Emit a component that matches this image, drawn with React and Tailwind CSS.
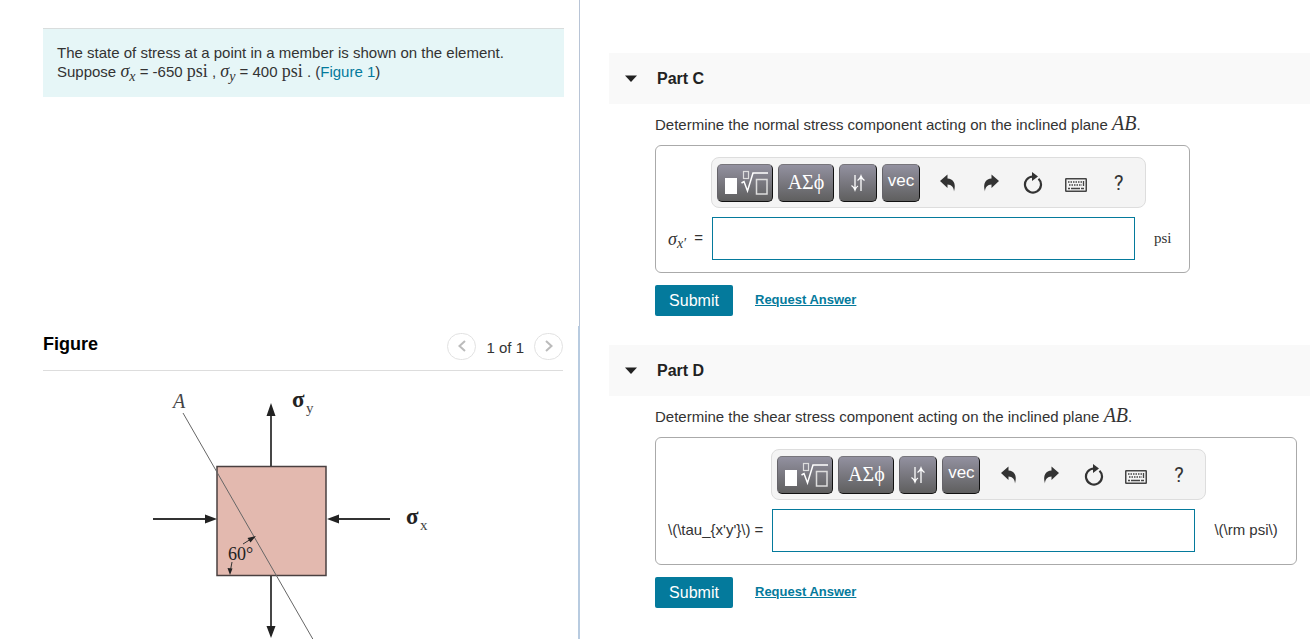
import React from 'react';

const parts = [
  {
    id: 'c',
    title: 'Part C',
    kind: 'normal',
    label: (
      <span className="flex items-center gap-2">
        <Sym base="σ" sub="x′" />
        <span>=</span>
      </span>
    ),
    unit: <span className="font-['Liberation_Serif',serif]">psi</span>,
  },
  {
    id: 'd',
    title: 'Part D',
    kind: 'shear',
    label: "\\(\\tau_{x'y'}\\) =",
    unit: '\\(\\rm psi\\)',
  },
];

function Sym({ base, sub }) {
  return (
    <span className="font-['Liberation_Serif',serif] text-lg leading-none italic">
      {base}
      <sub className="text-sm leading-none">{sub}</sub>
    </span>
  );
}

function Unit({ children }) {
  return (
    <span className="font-['Liberation_Serif',serif] text-lg leading-none">
      {children}
    </span>
  );
}

function TemplatesIcon() {
  return (
    <svg width="46" height="28" viewBox="0 0 46 28" fill="none">
      <rect x="3" y="9" width="12" height="16" fill="#fff" />
      <rect x="21.5" y="2.500" width="5" height="7" stroke="#ddd" strokeWidth="1.2" />
      <path d="M19.500 14l2.500-1.500 3.500 9.500L31 4h15" stroke="#fff" strokeWidth="1.5" />
      <rect x="34.500" y="10.500" width="10.500" height="14.500" stroke="#ddd" strokeWidth="1.5" />
    </svg>
  );
}

function ArrowsIcon() {
  return (
    <svg width="16" height="20" viewBox="0 0 16 20" fill="none" stroke="#fff" strokeWidth="1.3">
      <path d="M5 2v15M1.5 12.5Q4 14 5 17q1-3 3-4M11 18V3M7.500 7.500Q10 6 11 3q1 3 3.500 4.500" />
    </svg>
  );
}

function UndoIcon() {
  return (
    <svg width="18" height="18" viewBox="0 0 18 18" fill="#333">
      <path d="M1 7 8.500 0.500v4c5.500.3 9 4.500 6.500 13-.1-4-2.500-7-6.500-7V14z" />
    </svg>
  );
}

function RedoIcon() {
  return (
    <svg width="18" height="18" viewBox="0 0 18 18" fill="#333">
      <path d="M17 7 9.500 0.500v4C4 4.800.5 9 3 17.500c.1-4 2.500-7 6.500-7V14z" />
    </svg>
  );
}

function ResetIcon() {
  return (
    <svg width="20" height="22" viewBox="0 0 20 22" fill="none">
      <path d="M10 4.500a8 8 0 1 0 5.500 2.200" stroke="#333" strokeWidth="2.200" />
      <path d="M9 0l6 4.500L9 9z" fill="#333" />
    </svg>
  );
}

function KeyboardIcon() {
  return (
    <svg width="22" height="14" viewBox="0 0 22 14" fill="none" stroke="#444">
      <rect x="0.750" y="0.750" width="20.500" height="12.500" rx="0.5" strokeWidth="1.5" />
      <path d="M3 4h14M4 7h13" strokeWidth="1.300" strokeDasharray="1.500 1" />
      <path d="M3 10.500h2M6 10.500h9M16 10.500h3M18.500 3v5" strokeWidth="1.3" />
    </svg>
  );
}

const darkButton =
  'flex h-[38px] items-center justify-center rounded-[5px] border border-t-[#77757b] border-l-[#66646a] border-r-[#111] border-b-[#111] bg-linear-to-b from-[#9391a0] to-[#5f5f5f] text-white';
const toolButton = 'flex h-[38px] w-[43px] items-center justify-center';

function Toolbar() {
  return (
    <div className="flex h-[51px] items-center rounded-lg border border-[#ddd] bg-[#f4f4f4] px-[5px]">
      <div className="mr-[7px] flex gap-[5px]">
        <button type="button" aria-label="Templates" className={`${darkButton} w-14`}>
          <TemplatesIcon />
        </button>
        <button
          type="button"
          className={`${darkButton} w-14 pb-0.5 font-['Liberation_Serif',serif] text-xl`}
        >
          ΑΣϕ
        </button>
        <button type="button" aria-label="Arrows" className={`${darkButton} w-[38px]`}>
          <ArrowsIcon />
        </button>
        <button type="button" className={`${darkButton} w-[38px] pb-1 text-[17px]`}>
          vec
        </button>
      </div>
      <button type="button" aria-label="Undo" className={toolButton}>
        <UndoIcon />
      </button>
      <button type="button" aria-label="Redo" className={toolButton}>
        <RedoIcon />
      </button>
      <button type="button" aria-label="Reset" className={toolButton}>
        <ResetIcon />
      </button>
      <button type="button" aria-label="Keyboard shortcuts" className={`${toolButton} pt-1`}>
        <KeyboardIcon />
      </button>
      <button
        type="button"
        aria-label="Help"
        className={`${toolButton} font-[Roboto,sans-serif] text-xl text-[#333]`}
      >
        ?
      </button>
    </div>
  );
}

function Part({ part }) {
  const inputId = `answer-${part.id}`;
  return (
    <section className="mb-[29px]">
      <h2 className="flex h-[51px] items-center bg-[#f9f9f9] pl-4 text-base font-bold text-[#222]">
        <button type="button" className="flex items-center gap-5">
          <svg width="12" height="7" viewBox="0 0 12 7" fill="#222">
            <path d="M0 0.500h12L6 7z" />
          </svg>
          {part.title}
        </button>
      </h2>
      <div className="pl-[46px]">
        <p className="h-[41px] leading-[41px] whitespace-nowrap">
          Determine the {part.kind} stress component acting on the inclined plane{' '}
          <span className="font-['Liberation_Serif',serif] text-xl leading-none italic">AB</span>.
        </p>
        <div className="inline-grid grid-cols-[auto_435px_auto] items-center gap-y-[9px] rounded-md border border-[#aaa] pt-[11px] pr-[18px] pb-3 pl-3 align-top">
          <div className="col-start-2">
            <Toolbar />
          </div>
          <label htmlFor={inputId} className="col-start-1 mr-2 whitespace-nowrap">
            {part.label}
          </label>
          <input
            id={inputId}
            type="text"
            className="mr-[11px] ml-px h-[43px] border border-[#047a9c] bg-white px-2 outline-none"
          />
          <span className="ml-2">{part.unit}</span>
        </div>
        <div className="mt-3 flex items-center gap-[22px]">
          <button
            type="submit"
            className="h-[31px] w-[78px] rounded-xs bg-[#047a9c] text-base text-white"
          >
            Submit
          </button>
          <a href="#request" className="pb-0.5 text-[13px] font-bold text-[#047a9c] underline">
            Request Answer
          </a>
        </div>
      </div>
    </section>
  );
}

function StressElement() {
  return (
    <svg
      width="300"
      height="290"
      viewBox="0 0 300 290"
      className="ml-[100px] font-['Liberation_Serif',serif]"
      fill="#222"
    >
      <rect x="74" y="95.500" width="109" height="109" fill="#e3b9af" stroke="#4a4040" strokeWidth="1.5" />
      <g stroke="#333" strokeWidth="1.8">
        <path d="M128 95V42M128 205v53M10 148h54M247 148h-54" />
      </g>
      <path d="M128 32l-4.500 13h9zM128 267l-4.500-12h9zM74 148l-12-4.500v9zM184 148l12-4.500v9z" />
      <path d="M40 42 183 291" stroke="#666" />
      <path d="M100 173l8-5M89 191l-1.500 8" stroke="#333" />
      <path d="M113 165l-5.500 6.500-3-4.500zM87 204l-2.500-7 5 .5z" />
      <text x="30" y="37" fontSize="20" fontStyle="italic" fill="#444">
        A
      </text>
      <text x="149" y="36" fontSize="23" fontWeight="bold">
        σ
      </text>
      <text x="163" y="42" fontSize="15" fill="#444">
        y
      </text>
      <text x="263" y="153" fontSize="23" fontWeight="bold">
        σ
      </text>
      <text x="277" y="159" fontSize="15" fill="#444">
        x
      </text>
      <text x="85" y="189" fontSize="18">
        60°
      </text>
    </svg>
  );
}

const pager =
  'flex h-[27px] w-[29px] items-center justify-center rounded-full border border-[#e2e2e2]';

function Problem() {
  return (
    <aside className="flex h-full w-[580px] shrink-0 flex-col">
      <div className="basis-[51%] border-r border-[#b8c4d6] pt-7 pr-[15px] pl-[43px]">
        <div className="border-t border-[#d9dddd] bg-[#e6f6f7] px-[14px] pt-[15px] pb-[17px] leading-[18px]">
          <p>The state of stress at a point in a member is shown on the element.</p>
          <p className="h-[18px]">
            Suppose <Sym base="σ" sub="x" /> = -650 <Unit>psi</Unit> ,{' '}
            <Sym base="σ" sub="y" /> = 400 <Unit>psi</Unit> . (
            <a href="#figure" className="text-[#047a9c]">
              Figure 1
            </a>
            )
          </p>
        </div>
      </div>
      <div
        id="figure"
        className="min-h-0 flex-1 overflow-hidden border-r-2 border-[#b8cbe0] pr-[15px] pl-[43px]"
      >
        <div className="flex h-[45px] items-center justify-between border-b border-[#ddd]">
          <h2 className="pb-2 text-lg font-bold text-black">Figure</h2>
          <div className="flex items-center gap-[10px] pb-[3px]">
            <button type="button" aria-label="Previous" className={pager}>
              <svg width="8" height="12" viewBox="0 0 8 12" fill="none" stroke="#bbb" strokeWidth="2">
                <path d="M7 1 1.500 6 7 11" />
              </svg>
            </button>
            <span className="pt-1">1 of 1</span>
            <button type="button" aria-label="Next" className={pager}>
              <svg width="8" height="12" viewBox="0 0 8 12" fill="none" stroke="#bbb" strokeWidth="2">
                <path d="M1 1l5.500 5L1 11" />
              </svg>
            </button>
          </div>
        </div>
        <StressElement />
      </div>
    </aside>
  );
}

export default function App() {
  return (
    <div className="flex h-screen overflow-hidden bg-white font-['Liberation_Sans',Arial,sans-serif] text-[15px] text-[#333]">
      <Problem />
      <main className="min-w-0 flex-1 overflow-hidden pt-[53px] pl-[29px]">
        {parts.map((part) => (
          <Part key={part.id} part={part} />
        ))}
      </main>
    </div>
  );
}
